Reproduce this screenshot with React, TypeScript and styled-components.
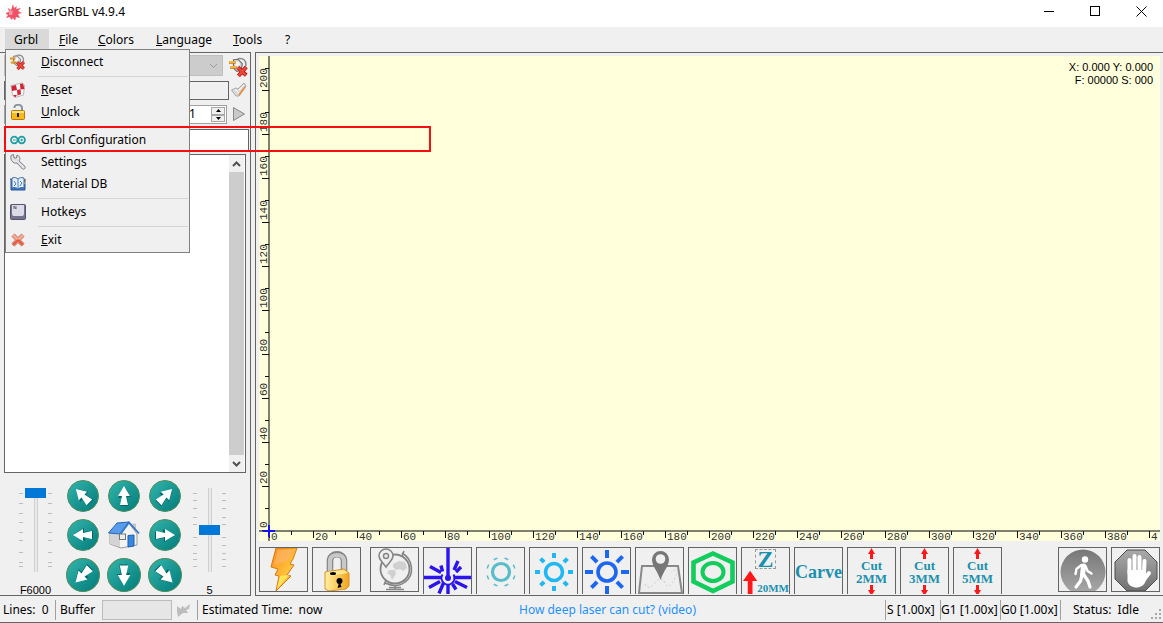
import React from 'react';
import styled, { createGlobalStyle } from 'styled-components';

const ui = '"Noto Sans", "Noto Sans CJK SC", sans-serif';
const small = '"Liberation Sans", Arial, sans-serif';
const serif = '"Liberation Serif", "Times New Roman", serif';
const line = '#646464';
const face = '#f0f0f0';

const GlobalStyle = createGlobalStyle`
  * { box-sizing: border-box; }
  body { margin: 0; background: ${face}; font: 12px/16px ${ui}; color: #000; }
  button, input, select { font: inherit; color: inherit; margin: 0; }
`;

const Window = styled.div`
  display: flex;
  flex-direction: column;
  min-height: 100vh;
  position: relative;
  overflow: hidden;
`;

const TitleBar = styled.header`
  display: flex;
  align-items: center;
  height: 27px;
  padding: 0 6px 4px 6px;
  background: #fff;
`;

const Title = styled.h1`
  flex: 1;
  margin: 0 0 0 6px;
  font: 12px/16px ${ui};
`;

const CaptionButtons = styled.div`
  display: flex;
  gap: 14px;
`;

const CaptionButton = styled.button`
  display: grid;
  place-items: center;
  width: 32px;
  height: 22px;
  padding: 0;
  border: 0;
  background: none;
`;

const MenuBar = styled.nav`
  display: flex;
  height: 25px;
  padding: 2px 0 0 5px;
`;

const MenuSlot = styled.div<{ $width: number }>`
  position: relative;
  width: ${p => p.$width}px;
`;

const MenuButton = styled.button<{ $open?: boolean }>`
  height: 21px;
  padding: 0 8px 0 9px;
  border: 0;
  white-space: pre;
  background: ${p => (p.$open ? '#d9d9d9' : 'none')};
`;

const Dropdown = styled.div`
  position: absolute;
  z-index: 5;
  top: 20px;
  left: 0;
  width: 185px;
  padding: 1px 1px 1px 4px;
  border: 1px solid #808080;
  background: ${face};
`;

const MenuItem = styled.button`
  display: flex;
  align-items: center;
  gap: 15px;
  width: 100%;
  height: 22px;
  padding: 0;
  border: 0;
  background: none;
  white-space: pre;
  text-align: left;
`;

const Separator = styled.hr`
  height: 1px;
  margin: 3px 0 2px 28px;
  border: 0;
  background: #d5d5d5;
`;

const Highlight = styled.div`
  position: absolute;
  z-index: 8;
  top: 126px;
  left: 4px;
  width: 427px;
  height: 26px;
  border: 2px solid #f50f0f;
  pointer-events: none;
`;

const Main = styled.main`
  flex: 1;
  display: flex;
  gap: 4px;
  min-height: 0;
`;

const SidePanel = styled.section`
  display: flex;
  flex-direction: column;
  width: 251px;
  flex: none;
  padding: 2px 3px 0 4px;
  border: solid ${line};
  border-width: 1px 1px 1px 0;
`;

const Fields = styled.div`
  display: grid;
  grid-template-rows: 21px 19px 19px 22px;
  gap: 5px;
`;

const FieldRow = styled.div`
  display: flex;
  align-items: flex-start;
  justify-content: space-between;
`;

const PortSelect = styled.select`
  appearance: none;
  width: 219px;
  height: 21px;
  border: 1px solid #bfbfbf;
  border-radius: 0;
  background: #ccc;
  opacity: 1;
`;

const SelectBox = styled.div`
  display: grid;
  align-items: center;
  justify-items: end;
  & > * { grid-area: 1 / 1; }
  & > svg { margin-right: 5px; z-index: 1; }
`;

const TextField = styled.input<{ $width: string; $height: number; $fill?: string }>`
  width: ${p => p.$width};
  height: ${p => p.$height}px;
  padding: 0 3px;
  border: 1px solid ${line};
  background: ${p => p.$fill || '#fff'};
`;

const Spinner = styled.div`
  display: flex;
  width: 223px;
  height: 19px;
  padding: 1px;
  border: 1px solid #a0a0a0;
  background: #fff;
`;

const SpinInput = styled.input`
  flex: 1;
  min-width: 0;
  height: 14px;
  padding: 0 0 0 183px;
  border: 0;
  font: 12px/14px ${ui};
`;

const SpinButtons = styled.div`
  display: grid;
  width: 14px;
`;

const SpinButton = styled.button`
  display: grid;
  place-items: center;
  padding: 0;
  border: 1px solid #a8a8a8;
  background: ${face};
`;

const IconButton = styled.button<{ $height?: number }>`
  display: grid;
  place-items: center;
  width: 20px;
  height: ${p => p.$height || 17}px;
  padding: 0;
  border: 0;
  background: none;
`;

const LogBox = styled.div`
  display: flex;
  justify-content: flex-end;
  flex: 1;
  min-height: 120px;
  margin: 3px 1px 0 0;
  border: 1px solid ${line};
  background: #fff;
`;

const ScrollBar = styled.div`
  display: flex;
  flex-direction: column;
  width: 15px;
  margin-right: 1px;
  background: ${face};
`;

const ScrollButton = styled.button`
  display: grid;
  place-items: center;
  height: 17px;
  padding: 0;
  border: 0;
  background: ${face};
`;

const ScrollThumb = styled.div`
  flex: 1;
  background: #cdcdcd;
`;

const Jog = styled.div`
  display: flex;
  height: 122px;
  padding: 4px 21px 0 15px;
  gap: 8px;
`;

const SpeedControl = styled.label`
  display: flex;
  flex-direction: column;
  align-items: center;
  width: 33px;
  padding-top: 11px;
  gap: 12px;
  font: 11px/12px ${small};
`;

const Gauge = styled.span`
  display: flex;
  align-items: flex-start;
  gap: 2px;
`;

const Range = styled.input`
  appearance: none;
  writing-mode: vertical-lr;
  direction: rtl;
  width: 21px;
  height: 84px;
  background: linear-gradient(90deg, transparent 9px, #d0d0d0 9px, #d0d0d0 10px, #e7eaea 10px, #e7eaea 12px, #d0d0d0 12px, #d0d0d0 13px, transparent 13px);
  &::-webkit-slider-runnable-track { width: 21px; height: 84px; background: none; }
  &::-webkit-slider-thumb { appearance: none; width: 21px; height: 10px; border: 0; border-radius: 0; background: #0078d7; }
`;

const JogGrid = styled.div`
  display: grid;
  flex: 1;
  grid-template-columns: repeat(3, 41px);
  grid-template-rows: 38px 40px 40px;
  justify-content: end;
`;

const JogButton = styled.button`
  display: grid;
  place-items: center;
  padding: 0;
  border: 0;
  background: none;
`;

const WorkPanel = styled.section`
  display: flex;
  flex-direction: column;
  flex: 1;
  min-width: 0;
  padding: 3px 3px 1px;
  border: solid ${line};
  border-width: 1px 0 1px 1px;
`;

const Preview = styled.div`
  position: relative;
  flex: 1;
  min-height: 200px;
  background: #ffffdc;
`;

const Rulers = styled.svg`
  position: absolute;
  inset: 0;
  width: 100%;
  height: 100%;
  overflow: visible;
  font: 11px "Liberation Mono", monospace;
`;

const Coordinates = styled.output`
  position: absolute;
  top: 5px;
  right: 7px;
  text-align: right;
  font: 11px/13px ${small};
`;

const ToolRow = styled.div`
  display: flex;
  gap: 4px;
  height: 47px;
  margin-top: 6px;
  overflow: hidden;
`;

const ToolGroup = styled.div<{ $lead?: number; $end?: boolean }>`
  display: flex;
  gap: 4px;
  margin-left: ${p => (p.$end ? 'auto' : `${p.$lead || 0}px`)};
`;

const Tool = styled.button<{ $tall?: boolean }>`
  display: flex;
  flex-direction: column;
  flex: none;
  align-items: center;
  justify-content: center;
  width: 49px;
  height: ${p => (p.$tall ? 50 : 45)}px;
  padding: 0;
  overflow: hidden;
  border: 1px solid ${line};
  background: ${face};
`;

const ToolText = styled.span<{ $size: number }>`
  font: bold ${p => p.$size}px/13px ${serif};
  color: #1b90ae;
`;

const LiftRow = styled.span`
  display: flex;
  align-items: flex-end;
  width: 47px;
  padding-left: 1px;
  margin-top: 1px;
`;

const LiftAxis = styled.span`
  padding: 0 1px;
  border: 1px dashed #999;
  font: bold 24px/18px ${serif};
  color: #1b90ae;
`;

const StatusBar = styled.footer`
  display: flex;
  align-items: center;
  height: 27px;
  padding-top: 1px;
  border-bottom: 1px solid #666;
  white-space: pre;
`;

const StatusCell = styled.span<{ $width: number; $pad?: number; $open?: boolean }>`
  display: flex;
  flex: none;
  align-items: center;
  height: 20px;
  width: ${p => p.$width}px;
  padding-left: ${p => p.$pad ?? 4}px;
  border-right: ${p => (p.$open ? 0 : 1)}px solid #a0a0a0;
`;

const BufferBar = styled.span`
  width: 70px;
  height: 20px;
  margin: 0 4px 0 7px;
  border: 1px solid #bcbcbc;
  background: #e6e6e6;
`;

const Link = styled.a`
  color: #1e90ff;
  text-decoration: none;
`;

const LinkCell = styled.span`
  flex: 1;
  display: flex;
  align-items: center;
  justify-content: center;
  height: 20px;
  border-right: 1px solid #a0a0a0;
`;

const Grip = styled.svg`
  align-self: flex-end;
  margin: 0 1px 2px auto;
`;

/* ---------- small icons ---------- */

const Splash = () => (
  <svg width="16" height="16" viewBox="0 0 16 16">
    <path d="M7 0l1 4 3-2-1 3 5-1-3 3 4 2-4 1 2 4-4-1-1 4-2-3-2 2-1-3-4 1 2-3-3-2 4-1-1-4 3 2z" fill="#f0526a" />
    <path d="M3 6l4 1-1 4-3 0z" fill="#f89aa6" />
  </svg>
);

const PlugOff = ({ size = 18 }: { size?: number }) => (
  <svg width={size} height={size} viewBox="0 0 18 18">
    <path d="M8 1.500c5-1 8 2 7 7" fill="none" stroke="#8a8a8a" strokeWidth="1.400" />
    <path d="M4 2.500L8 2l4 4-1 6-4 1-3-3z" fill="#d0d0d0" stroke="#6c6c6c" />
    <path d="M5 4l4 0 1 3-4 2z" fill="#f4f4f4" />
    <path d="M0 5h6M1 9.500h6" stroke="#c87812" strokeWidth="2.200" />
    <path d="M0 4.500h5.500M1 9h5.500" stroke="#ffc23c" strokeWidth="1.200" />
    <path d="M8 9.500l7.500 7M15.500 9l-7 8" stroke="#a81818" strokeWidth="3.600" />
    <path d="M8 9.500l7.500 7M15.500 9l-7 8" stroke="#f04638" strokeWidth="2.200" />
  </svg>
);

const ResetIcon = () => (
  <svg width="16" height="16" viewBox="0 0 16 16">
    <path d="M1 3.500L12 1l2.500 2-1 10L5 15.500 2.500 13z" fill="#fafafa" stroke="#b9b9b9" />
    <path d="M1.500 4L6 3l1 5-5 1zM10 2l3-.5 1.500 5.500-4 .5zM7 8l3.500-.7.5 5-3.500 1.200zM3 13l4 0-2 2.500z" fill="#d32232" />
  </svg>
);

const OpenLockIcon = () => (
  <svg width="16" height="16" viewBox="0 0 16 16">
    <path d="M4.500 4V3C5 0 12 0 12 4v3" fill="none" stroke="#8796a5" strokeWidth="2" />
    <rect x="1.500" y="6.500" width="13" height="9" rx="1" fill="#f7b91c" stroke="#b87a08" />
    <path d="M2 8h12" stroke="#ffe37a" strokeWidth="2" />
    <path d="M8 9v4" stroke="#222" strokeWidth="2" />
  </svg>
);

const InfinityIcon = () => (
  <svg width="16" height="16" viewBox="0 0 16 16" fill="none" stroke="#1d9da4">
    <circle cx="4.300" cy="8" r="3.300" strokeWidth="1.700" />
    <circle cx="11.700" cy="8" r="3.300" strokeWidth="1.700" />
    <path d="M3 8h2.600M10.400 8H13M11.700 6.700v2.600" />
  </svg>
);

const WrenchIcon = () => (
  <svg width="16" height="16" viewBox="0 0 16 16">
    <path d="M1 1.500L3.500.5 4 4l2.500 0 .5-3c3 1 3.500 4 2 6l6 5.500c1 1.500-1 3.500-2.500 2.500L7 9C3 10 0 6 1 1.500z" fill="#e4e4e8" stroke="#7c7c84" />
  </svg>
);

const BookIcon = () => (
  <svg width="16" height="16" viewBox="0 0 16 16">
    <path d="M0 3h1v11h14V3" fill="#3c78c0" stroke="#28579a" />
    <path d="M2 2c3-1 5 0 6 1 1-1 3-2 6-1v10c-3-1-5 0-6 1-1-1-3-2-6-1z" fill="#e8f1fb" stroke="#3c6ea8" />
    <path d="M8 3v10M4 5l2 3-2 2M10 5l2 2-2 3" stroke="#3f80c7" fill="none" />
    <path d="M15 3v2" stroke="#e35b35" /><path d="M15 6v2" stroke="#ecc832" />
  </svg>
);

const KeyIcon = () => (
  <svg width="16" height="16" viewBox="0 0 16 16">
    <rect x=".5" y=".5" width="15" height="15" rx="1" fill="#73738c" stroke="#55556d" />
    <path d="M2 1h12v9l-1 2H3l-1-2z" fill="#dcdce8" />
    <path d="M4 5V2l2 3V2" stroke="#555" fill="none" strokeWidth=".8" />
  </svg>
);

const CrossIcon = () => (
  <svg width="16" height="16" viewBox="0 0 16 16">
    <path d="M3 3l10 10M13 3L3 13" stroke="#b9786a" strokeWidth="4.400" />
    <path d="M3 3l10 10M13 3L3 13" stroke="#f6a890" strokeWidth="3" />
    <path d="M8 8l5 5M8 8l-5 5" stroke="#e8593c" strokeWidth="2.200" />
  </svg>
);

const Eraser = () => (
  <svg width="16" height="16" viewBox="0 0 16 16">
    <path d="M.5 8L5 6l2 1 6-6 2 3-7 10-3 0z" fill="#dcdcdc" stroke="#a5a5a5" />
    <path d="M8 13l6-8" stroke="#e6924a" strokeWidth="2" /><path d="M4 7l4 4M8 8l5-5" stroke="#fff" />
  </svg>
);

const Play = () => (
  <svg width="14" height="16" viewBox="0 0 14 16">
    <path d="M1.500 1.500v13L12.500 8z" fill="#c9c9c9" stroke="#888" />
  </svg>
);

const Chevron = ({ up, color = '#505050' }: { up?: boolean; color?: string }) => (
  <svg width="9" height="6" viewBox="0 0 9 6">
    <path d={up ? 'M1 5l3.500-3.500L8 5' : 'M1 1l3.500 3.500L8 1'} fill="none" stroke={color} strokeWidth={color === '#505050' ? 2 : 1} />
  </svg>
);

const Triangle = ({ up }: { up?: boolean }) => (
  <svg width="5" height="3" viewBox="0 0 5 3"><path d={up ? 'M0 3h5L2.500 0z' : 'M0 0h5L2.500 3z'} /></svg>
);

/* ---------- jog controls ---------- */

const JogArrow = ({ angle, size = 32 }: { angle: number; size?: number }) => (
  <svg width={size} height={size} viewBox="0 0 32 32">
    <defs>
      <linearGradient id={`jog${angle}`} x1="0" y1="0" x2="1" y2="1">
        <stop offset="0" stopColor="#35b5ac" /><stop offset="1" stopColor="#007a7a" />
      </linearGradient>
    </defs>
    <circle cx="16" cy="16" r="15.500" fill={`url(#jog${angle})`} stroke="#4e8e5c" />
    <g transform={`rotate(${angle} 16 16)`}>
      <path d="M17 7l6 10-4 0 1.500 9-8 0 1.500-8-4 0z" fill="#086565" />
      <path d="M16 6l6 10-4 0 2 9h-8l2-9-4 0z" fill="#fff" />
    </g>
  </svg>
);

const House = () => (
  <svg width="32" height="28" viewBox="0 0 32 28">
    <path d="M2 12v11l11 4 16-3V13L21 2z" fill="#f4f4f4" stroke="#9a9a9a" />
    <path d="M2 13v10l10 3V13z" fill="#d4d4d4" />
    <path d="M25 3l2.500 0v5L25 6z" fill="#ccc" stroke="#aaa" strokeWidth=".5" />
    <path d="M.5 12L9 2l12-1-8.500 12z" fill="#5a9cec" stroke="#2464b4" />
    <path d="M12.500 13L21 1.500l10 11" fill="none" stroke="#3274c8" strokeWidth="1.800" />
    <path d="M20 14.500l6-.5v11l-6 1z" fill="#3589df" stroke="#1d5ca8" />
    <rect x="11.500" y="13" width="6" height="5.500" fill="#eee" stroke="#777" />
  </svg>
);

const Ticks = ({ at }: { at: number[] }) => (
  <svg width="4" height="84" viewBox="0 0 4 84">
    {at.map(y => <path key={y} d={`M0 ${y}.5h4`} stroke="#bdbdbd" />)}
  </svg>
);

/* ---------- tool icons ---------- */

const Bolt = () => (
  <svg width="47" height="43" viewBox="0 0 47 43">
    <defs><linearGradient id="bolt" x1="0" y1="0" x2="1" y2="1"><stop offset="0" stopColor="#f98a18" /><stop offset=".6" stopColor="#ffc33c" /><stop offset="1" stopColor="#f58a10" /></linearGradient></defs>
    <path d="M16 0h21l-4 11-3 5 4 1-7 10 4 1-15 15 3-15-4-1 3-6-7-2z" fill="url(#bolt)" stroke="#d87814" />
    <path d="M18 2h16l-7 11-13 4z" fill="#ffb56a" opacity=".7" />
    <path d="M20 28l9-1-12 14z" fill="#ffe45a" />
  </svg>
);

const Padlock = () => (
  <svg width="47" height="43" viewBox="0 0 47 43">
    <defs><linearGradient id="lock"><stop offset="0" stopColor="#fff0a2" /><stop offset="1" stopColor="#f3a51c" /></linearGradient></defs>
    <path d="M17 25V13C17 4 31 4 31 13v12" fill="none" stroke="#858585" strokeWidth="6.600" />
    <path d="M17 25V13C17 5 31 5 31 13v12" fill="none" stroke="#c8c8c8" strokeWidth="4.200" />
    <path d="M12 24l19-3 5 4v13l-3 3-17 2-4-2z" fill="url(#lock)" stroke="#d79224" />
    <path d="M13 24l18-2 4 3-18 3z" fill="#ffe890" /><ellipse cx="20" cy="25.500" rx="3" ry="1.500" />
    <circle cx="26.500" cy="33" r="3" /><path d="M26.500 33l-2 7 4-1z" />
  </svg>
);

const Globe = () => (
  <svg width="47" height="43" viewBox="0 0 47 43" fill="none" stroke="#858585">
    <circle cx="24" cy="21" r="14.500" strokeWidth="1.800" />
    <path d="M31 5c11 6 13 22 3 29-6 5-13 4-20 1M33 3l-2 5M15 32l-2 5M24 37v4M15 41.500h18M18 39.500h12" strokeWidth="1.600" />
    <path d="M22 16l6-3 6 1 2 6-4 3-3-2-4 1-3-3zM18 22l6 0 1 4-4 6-2-5-3-2z" fill="#d0d0d0" stroke="none" />
    <path d="M15 19C11 13 8 12 8 8a7 7 0 0 1 14 0C22 12 19 13 15 19z" fill={face} strokeWidth="1.600" />
    <circle cx="15" cy="8" r="2.500" strokeWidth="1.500" />
  </svg>
);

const Laser = () => (
  <svg width="47" height="48" viewBox="0 0 47 48" fill="none" stroke="#2b14ee" strokeWidth="3.400">
    <path d="M24 0v29M0 29.500h17.500M29.500 29.500H47M6 18.500l11 6M17 17.500l1.500 6M34 13l-4 9M37 19l-5 5M16 33.500L5 39.500M19.500 35L15 45.500M24 36v10M28.500 36l3.500 5.500M31 33.500l12 6" />
    <path d="M18.500 26.500a6.500 6.500 0 1 0 11 0" strokeWidth="2" /><circle cx="24" cy="30" r="3" fill="#2b14ee" stroke="none" />
  </svg>
);

const rays = [0, 45, 90, 135, 180, 225, 270, 315];

const Sun = ({ color, r, from, to, width, fine }: { color: string; r: number; from: number; to: number; width: number; fine?: boolean }) => (
  <svg width="47" height="48" viewBox="0 0 47 48" fill="none" stroke={color}>
    <circle cx="24" cy="24" r={r} strokeWidth={fine ? 3.200 : 3.600} />
    {rays.map(a => (
      <path key={a} transform={`rotate(${fine ? a + 22.500 : a} 24 24)`} strokeWidth={fine ? 1.500 : width}
        d={fine ? 'M22 10q2-.6 4 0' : `M24 ${24 - from}V${24 - to}`} />
    ))}
  </svg>
);

const MapPin = () => (
  <svg width="47" height="48" viewBox="0 0 47 48">
    <path d="M6 18h36l4 27H3z" fill="#eeeeee" stroke="#888" strokeWidth="2" />
    <path d="M9 36q4 7 10-1t10 0 10-5-4-6" fill="none" stroke="#ccc" strokeDasharray="2 2" />
    <path d="M24.500 32C21 22 16 18 16 11.500a8.500 8.500 0 0 1 17 0C33 18 28 22 24.500 32z" fill="#777" />
    <circle cx="24.500" cy="11" r="4.800" fill={face} />
  </svg>
);

const HexNut = () => (
  <svg width="47" height="48" viewBox="0 0 47 48" fill="none" stroke="#12cc5c">
    <path d="M24 5.500l19.500 9v19L24 43 4.500 33.500v-19z" strokeWidth="4.600" />
    <ellipse cx="24" cy="24" rx="10.500" ry="9" strokeWidth="4" />
  </svg>
);

const RedArrow = ({ down, big }: { down?: boolean; big?: boolean }) => (
  <svg width={big ? 15 : 7} height={big ? 25 : 11} viewBox={big ? '0 0 15 25' : '0 0 7 11'}>
    <path fill="#ff1818" d={big ? 'M7.500 0L15 11h-5v14H5V11H0z' : down ? 'M2 0h3v5H7l-3.500 6L0 5h2z' : 'M3.500 0L7 6H5v5H2V6H0z'} />
  </svg>
);

const Walk = () => (
  <svg width="47" height="43" viewBox="0 0 47 43">
    <defs><linearGradient id="grey" x1="0" y1="0" x2="0" y2="1"><stop offset="0" stopColor="#777" /><stop offset="1" stopColor="#aaa" /></linearGradient></defs>
    <circle cx="24" cy="24" r="22.500" fill="url(#grey)" />
    <circle cx="26" cy="11.500" r="3.200" fill="#fff" />
    <g fill="none" stroke="#fff" strokeLinecap="round" strokeLinejoin="round">
      <path d="M24.500 18l-1 9" strokeWidth="5" /><path d="M22.500 17l-5 4-1 5M26.500 18l2 5 4 2.500" strokeWidth="2.400" />
      <path d="M23 27l-1.500 6-4.500 6M25 27l4 6 2 6" strokeWidth="3.200" />
    </g>
  </svg>
);

const Hand = () => (
  <svg width="47" height="43" viewBox="0 0 47 43">
    <defs><linearGradient id="stop" x1="0" y1="0" x2="0" y2="1"><stop offset="0" stopColor="#aaa" /><stop offset="1" stopColor="#707070" /></linearGradient></defs>
    <path d="M15 2h18l12 12v17L33 43H15L3 31V14z" fill="url(#stop)" stroke="#4d4d4d" />
    <g stroke="#fff" strokeLinecap="round" strokeWidth="4" fill="none">
      <path d="M17.500 25V12M22.500 24V8M27.500 24V9M32 25l.5-12M31 33l6-8" />
    </g>
    <path d="M15.500 22H34l0 9c-1 11-17 11-18.500 2z" fill="#fff" />
  </svg>
);

/* ---------- rulers ---------- */

const STEP = 22;
const xTicks = Array.from({ length: 41 }, (_, i) => i);
const yTicks = Array.from({ length: 22 }, (_, i) => i);

const PreviewRulers = () => (
  <Rulers>
    <rect x="9" y="0" width="2" height="100%" fill="#80806e" />
    <svg y="100%" overflow="visible">
      <rect x="0" y="-11" width="100%" height="2" fill="#80806e" />
      {xTicks.map(i => <path key={i} d={`M${10.5 + i * STEP} -10v${i % 2 ? 4 : 7}`} stroke="#111" />)}
      {yTicks.map(i => <path key={i} d={`M10 ${-10.5 - i * STEP}h${i % 2 ? -4 : -7}`} stroke="#111" />)}
      <g fill="#333">
        {xTicks.filter(i => i % 2 === 0).map(i => (
          <text key={i} x={12 + i * STEP} y="-1">{i === 40 ? '4' : i * 10}</text>
        ))}
        {yTicks.filter(i => i % 2 === 0).map(i => (
          <text key={i} transform={`translate(8 ${-13 - i * STEP}) rotate(-90)`}>{i * 10}</text>
        ))}
      </g>
      <path d="M4 -10h12M10 -16v12" stroke="#1414f0" strokeWidth="2" />
    </svg>
  </Rulers>
);

/* ---------- data ---------- */

const menus = [
  { key: 'F', rest: 'ile', width: 39 },
  { key: 'C', rest: 'olors', width: 58 },
  { key: 'L', rest: 'anguage', width: 77 },
  { key: 'T', rest: 'ools', width: 52 },
  { key: '', rest: '?', width: 30 },
];

const grblMenu = [
  [{ icon: <PlugOff size={16} />, key: 'D', rest: 'isconnect' }],
  [{ icon: <ResetIcon />, key: 'R', rest: 'eset' }, { icon: <OpenLockIcon />, key: 'U', rest: 'nlock' }],
  [
    { icon: <InfinityIcon />, key: '', rest: 'Grbl Configuration' },
    { icon: <WrenchIcon />, key: '', rest: 'Settings' },
    { icon: <BookIcon />, key: '', rest: 'Material DB' },
  ],
  [{ icon: <KeyIcon />, key: '', rest: 'Hotkeys' }],
  [{ icon: <CrossIcon />, key: 'E', rest: 'xit' }],
];

const leftTicks = [5, 15, 25, 34, 44, 52, 64, 74, 78];
const rightTicks = [5, 12, 20, 29, 36, 49, 57, 65, 71, 78];

const jogs: { label: string; angle: number; size?: number }[] = [
  { label: 'Up left', angle: -45 }, { label: 'Up', angle: 0 }, { label: 'Up right', angle: 45 },
  { label: 'Left', angle: -90 }, { label: 'Home', angle: NaN }, { label: 'Right', angle: 90 },
  { label: 'Down left', angle: -135, size: 34 }, { label: 'Down', angle: 180, size: 34 }, { label: 'Down right', angle: 135, size: 34 },
];

export default function App() {
  return (
    <Window>
      <GlobalStyle />
      <TitleBar>
        <Splash />
        <Title>LaserGRBL v4.9.4</Title>
        <CaptionButtons>
          <CaptionButton aria-label="Minimize"><svg width="11" height="11"><path d="M0 5.500h10" stroke="#000" /></svg></CaptionButton>
          <CaptionButton aria-label="Maximize"><svg width="11" height="11"><rect x=".5" y=".5" width="9" height="9" fill="none" stroke="#000" /></svg></CaptionButton>
          <CaptionButton aria-label="Close"><svg width="11" height="11"><path d="M.5 .5l10 10M10.500 .5l-10 10" stroke="#000" /></svg></CaptionButton>
        </CaptionButtons>
      </TitleBar>

      <MenuBar>
        <MenuSlot $width={45}>
          <MenuButton $open>Grbl </MenuButton>
          <Dropdown>
            {grblMenu.map((group, g) => (
              <React.Fragment key={g}>
                {g > 0 && <Separator />}
                {group.map(item => (
                  <MenuItem key={item.rest}>{item.icon}<span>{item.key && <u>{item.key}</u>}{item.rest}</span></MenuItem>
                ))}
              </React.Fragment>
            ))}
          </Dropdown>
        </MenuSlot>
        {menus.map(m => (
          <MenuSlot key={m.rest} $width={m.width}>
            <MenuButton>{m.key && <u>{m.key}</u>}{m.rest}</MenuButton>
          </MenuSlot>
        ))}
      </MenuBar>

      <Main>
        <SidePanel>
          <Fields>
            <FieldRow>
              <SelectBox><PortSelect disabled aria-label="Port" /><Chevron color="#9a9a9a" /></SelectBox>
              <IconButton $height={23} aria-label="Disconnect"><PlugOff size={20} /></IconButton>
            </FieldRow>
            <FieldRow>
              <TextField $width="225px" $height={19} $fill={face} readOnly aria-label="File name" />
              <IconButton aria-label="Open file"><Eraser /></IconButton>
            </FieldRow>
            <FieldRow>
              <Spinner>
                <SpinInput aria-label="Repeat count" defaultValue="1" />
                <SpinButtons>
                  <SpinButton aria-label="Increase"><Triangle up /></SpinButton>
                  <SpinButton aria-label="Decrease"><Triangle /></SpinButton>
                </SpinButtons>
              </Spinner>
              <IconButton aria-label="Run program"><Play /></IconButton>
            </FieldRow>
            <TextField $width="100%" $height={22} aria-label="Command" />
          </Fields>
          <LogBox>
            <ScrollBar>
              <ScrollButton aria-label="Scroll up"><Chevron up /></ScrollButton>
              <ScrollThumb />
              <ScrollButton aria-label="Scroll down"><Chevron /></ScrollButton>
            </ScrollBar>
          </LogBox>
          <Jog>
            <SpeedControl>
              <Gauge><Ticks at={leftTicks} /><Range type="range" defaultValue={100} /><Ticks at={leftTicks} /></Gauge>
              F6000
            </SpeedControl>
            <JogGrid>
              {jogs.map(j => (
                <JogButton key={j.label} aria-label={j.label}>
                  {j.label === 'Home' ? <House /> : <JogArrow angle={j.angle} size={j.size} />}
                </JogButton>
              ))}
            </JogGrid>
            <SpeedControl>
              <Gauge><Ticks at={rightTicks} /><Range type="range" defaultValue={50} /><Ticks at={rightTicks} /></Gauge>
              5
            </SpeedControl>
          </Jog>
        </SidePanel>

        <WorkPanel>
          <Preview>
            <PreviewRulers />
            <Coordinates>X: 0.000 Y: 0.000<br />F: 00000 S: 000</Coordinates>
          </Preview>
          <ToolRow>
            <ToolGroup>
              <Tool aria-label="Reset"><Bolt /></Tool>
              <Tool aria-label="Unlock"><Padlock /></Tool>
            </ToolGroup>
            <ToolGroup $lead={5}>
              <Tool aria-label="Set zero"><Globe /></Tool>
              <Tool $tall aria-label="Laser"><Laser /></Tool>
              <Tool $tall aria-label="Low power"><Sun color="#58bdc8" r={8.5} from={0} to={0} width={1} fine /></Tool>
              <Tool $tall aria-label="Medium power"><Sun color="#1fb8f2" r={8.5} from={14} to={19} width={4} /></Tool>
              <Tool $tall aria-label="High power"><Sun color="#1c66f2" r={9} from={14} to={22} width={4} /></Tool>
              <Tool $tall aria-label="Frame"><MapPin /></Tool>
              <Tool $tall aria-label="Center"><HexNut /></Tool>
              <Tool $tall>
                <LiftAxis>Z</LiftAxis>
                <LiftRow><RedArrow big /><ToolText $size={11}>20MM</ToolText></LiftRow>
              </Tool>
              <Tool $tall><ToolText $size={18}>Carve</ToolText></Tool>
              {['2MM', '3MM', '5MM'].map(depth => (
                <Tool $tall key={depth}>
                  <RedArrow />
                  <ToolText $size={13}>Cut</ToolText>
                  <ToolText $size={13}>{depth}</ToolText>
                  <RedArrow down />
                </Tool>
              ))}
            </ToolGroup>
            <ToolGroup $end>
              <Tool aria-label="Resume"><Walk /></Tool>
              <Tool aria-label="Hold"><Hand /></Tool>
            </ToolGroup>
          </ToolRow>
        </WorkPanel>
      </Main>

      <StatusBar>
        <StatusCell $width={56} $pad={3}>Lines:  0</StatusCell>
        <StatusCell $width={142}>
          Buffer<BufferBar />
          <svg width="16" height="16" viewBox="0 0 16 16"><path d="M1 4l4 3 1-3 3 2 5-4-1 5-3 1 2 3-5 0-5 4-1-5z" fill="#bdbdbd" /></svg>
        </StatusCell>
        <StatusCell $width={132} $open>Estimated Time:  now</StatusCell>
        <LinkCell><Link href="#video">How deep laser can cut? (video)</Link></LinkCell>
        <StatusCell $width={55} $pad={1}>S [1.00x]</StatusCell>
        <StatusCell $width={60} $pad={0}>G1 [1.00x]</StatusCell>
        <StatusCell $width={60} $pad={0}>G0 [1.00x]</StatusCell>
        <StatusCell $width={90} $pad={12} $open>Status:  Idle</StatusCell>
        <Grip width="11" height="11" fill="#a8a8a8">
          <path d="M8 0h2v2h-2zM4 4h2v2h-2zM8 4h2v2h-2zM0 8h2v2h-2zM4 8h2v2h-2zM8 8h2v2h-2z" />
        </Grip>
      </StatusBar>
      <Highlight />
    </Window>
  );
}
